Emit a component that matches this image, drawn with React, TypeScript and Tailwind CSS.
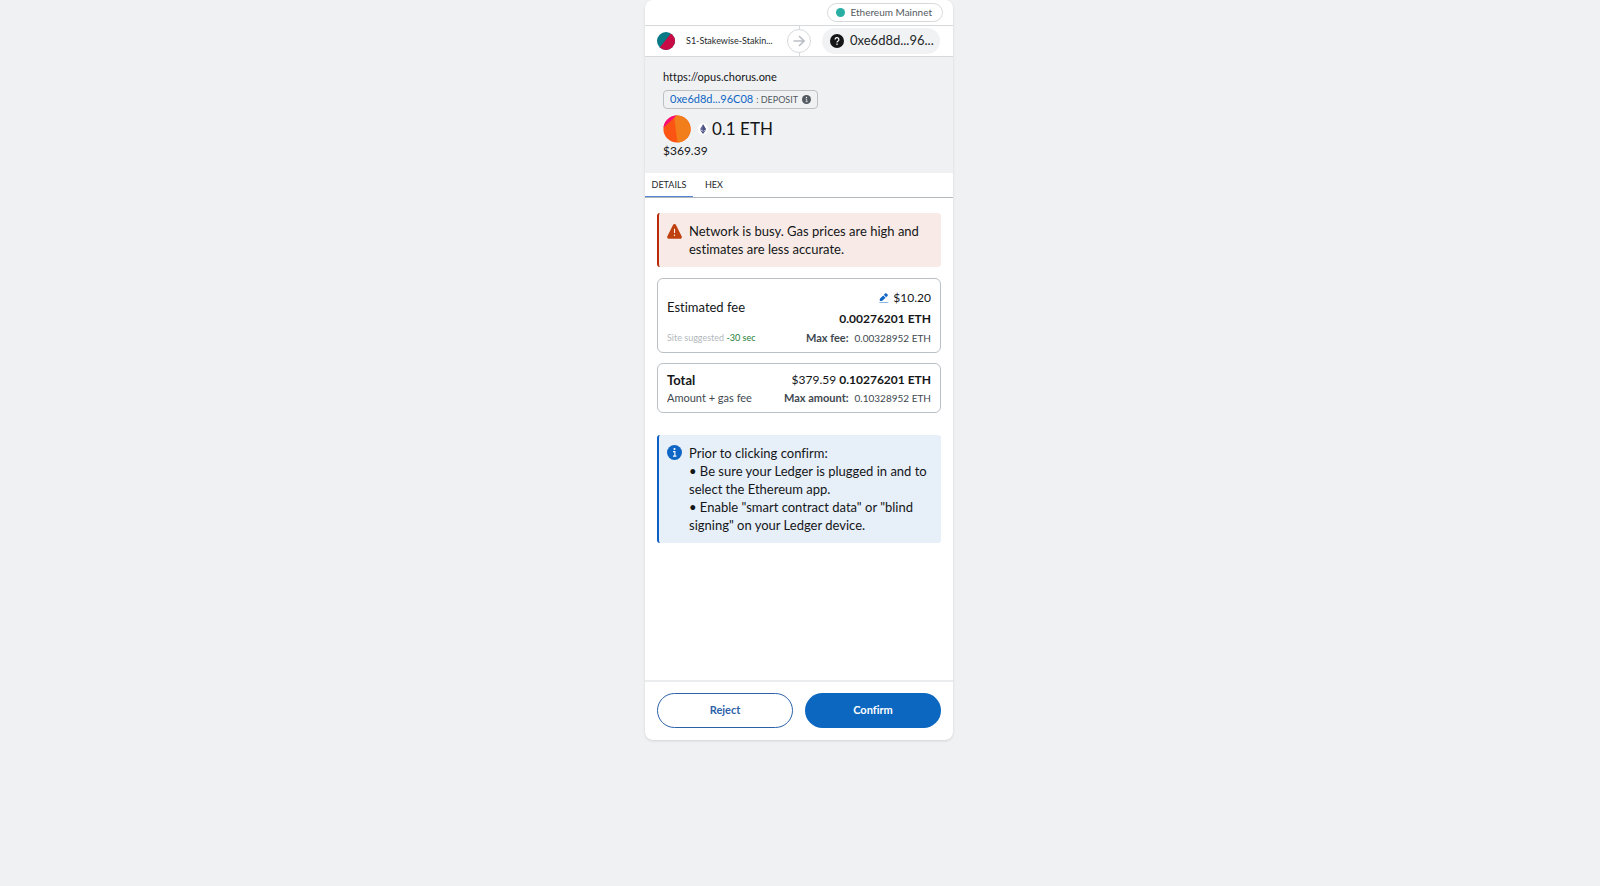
import type { ReactNode } from 'react'

function InfoIcon({ className }: { className: string }) {
  return (
    <svg viewBox="0 0 16 16" className={className} aria-hidden="true">
      <circle cx="8" cy="8" r="8" fill="currentColor" />
      <circle cx="8" cy="4.3" r="1.1" fill="#fff" />
      <path d="M6.4 7.1h2v4.6M6.4 11.8h3.6" stroke="#fff" strokeWidth="1.2" fill="none" />
    </svg>
  )
}

function WarningIcon() {
  return (
    <svg viewBox="0 0 16 16" className="mt-[2px] size-[15px] shrink-0 text-[#bf4110]" aria-hidden="true">
      <path
        d="M8 2 14 14H2Z"
        fill="currentColor"
        stroke="currentColor"
        strokeWidth="3.6"
        strokeLinejoin="round"
      />
      <path d="M8 5v4.6M8 11.2v1.7" stroke="#f8ebe7" strokeWidth="1.2" />
    </svg>
  )
}

function AccountAvatar() {
  return (
    <svg viewBox="0 0 18 18" className="size-[18px] shrink-0" aria-hidden="true">
      <clipPath id="account">
        <circle cx="9" cy="9" r="9" />
      </clipPath>
      <g clipPath="url(#account)">
        <rect width="18" height="18" fill="#077a85" />
        <path d="M15 0 2 16.5 4 18h14V0Z" fill="#c80a45" />
        <path d="M0 12.5 4.5 18H0Z" fill="#2a50d8" />
      </g>
    </svg>
  )
}

function SiteAvatar() {
  return (
    <svg viewBox="0 0 28 28" className="size-7" aria-hidden="true">
      <clipPath id="site">
        <circle cx="14" cy="14" r="13.6" />
      </clipPath>
      <g clipPath="url(#site)">
        <rect width="28" height="28" fill="#fc5412" />
        <path d="M11 0 14.5 28H28V0Z" fill="#f27e1b" />
        <path d="M0 0h14L0 13Z" fill="#fb0a7c" />
      </g>
    </svg>
  )
}

function EthIcon() {
  return (
    <svg viewBox="0 0 10 12" className="h-3 w-[10px]" aria-hidden="true">
      <ellipse cx="5" cy="6" rx="5" ry="6" fill="#fff" />
      <path d="M5 1.2 2 6.2 5 8l3-1.8Z" fill="#62689a" />
      <path d="M5 1.2V8l3-1.8ZM2 6.9l3 4.2 3-4.2-3 1.7Z" fill="#4a5080" />
    </svg>
  )
}

function Header() {
  return (
    <header>
      <div className="flex h-[26px] items-center justify-end border-b border-[#d6d9dc] pr-[10px]">
        <div className="flex h-[19px] items-center gap-[5px] rounded-full border border-[#d6d9dc] pr-[10px] pl-2 text-[10px] text-[#535a61]">
          <span className="size-[9px] rounded-full bg-[#29aea4]" />
          Ethereum Mainnet
        </div>
      </div>
      <div className="flex h-[31px] items-center border-b border-[#d6d9dc] pr-[13px] pl-3">
        <AccountAvatar />
        <span className="ml-[11px] flex-1 text-[9px] text-[#24272a]">S1-Stakewise-Stakin...</span>
        <div className="flex h-full flex-col items-center">
          <span className="w-px flex-1 bg-[#d6d9dc]" />
          <span className="flex size-6 items-center justify-center rounded-full border border-[#d6d9dc]">
            <svg viewBox="0 0 12 12" className="size-3" fill="none" stroke="#babfc5" strokeWidth="1.6" aria-hidden="true">
              <path d="M.5 6h10.5M6 1l5 5-5 5" />
            </svg>
          </span>
          <span className="w-px flex-1 bg-[#d6d9dc]" />
        </div>
        <div className="ml-[11px] flex h-[26px] w-[118px] items-center gap-[6px] rounded-full bg-[#f1f2f3] pl-2 text-[13px] text-[#24272a]">
          <svg viewBox="0 0 14 14" className="size-[14px] shrink-0" aria-hidden="true">
            <circle cx="7" cy="7" r="7" fill="#141618" />
            <path d="M5.1 5.6a1.9 1.9 0 1 1 2.7 1.7c-.6.3-.8.6-.8 1.2M7 9.6v1.3" fill="none" stroke="#fff" strokeWidth="1.2" />
          </svg>
          0xe6d8d...96...
        </div>
      </div>
    </header>
  )
}

function Summary() {
  return (
    <section className="bg-[#f0f1f3] px-[18px] pt-[11px] pb-[15px] text-[#141618]">
      <p className="text-[11px] leading-[18px]">https://opus.chorus.one</p>
      <div className="mt-1 flex h-[19px] w-fit items-center rounded-sm border border-[#bbc0c5] px-[6px] text-[11px]">
        <a href="#contract" className="text-[#0f66c5]">0xe6d8d...96C08</a>
        <span className="ml-[3px] text-[9px] text-[#535a61]">: DEPOSIT</span>
        <InfoIcon className="ml-1 size-[9px] text-[#535a61]" />
      </div>
      <div className="mt-[5px] flex h-[30px] items-center">
        <SiteAvatar />
        <span className="ml-[7px] flex items-center gap-1 text-[17px]">
          <EthIcon />
          0.1 ETH
        </span>
      </div>
      <p className="text-xs leading-[14px]">$369.39</p>
    </section>
  )
}

function Tabs() {
  return (
    <nav className="flex h-[25px] border-b border-[#b3b8bd] text-[9px] text-[#24272a]" role="tablist">
      <button type="button" role="tab" aria-selected="true" className="w-12 border-b border-[#5583d6]">
        DETAILS
      </button>
      <button type="button" role="tab" aria-selected="false" className="px-3">
        HEX
      </button>
    </nav>
  )
}

function Notice({ icon, className, children }: { icon: ReactNode; className: string; children: ReactNode }) {
  return (
    <div className={`flex gap-[7px] rounded-[3px] border-l-2 py-[9px] pr-2 pl-2 text-[13px] leading-[18px] text-[#141618] ${className}`}>
      {icon}
      <div>{children}</div>
    </div>
  )
}

export default function App() {
  return (
    <div className="min-h-screen bg-[#f0f1f3] pr-[2px] font-['Lato','Liberation_Sans',sans-serif] [font-variant-ligatures:none]">
      <main className="mx-auto flex min-h-[740px] max-w-[308px] flex-col overflow-hidden rounded-lg bg-white shadow-sm">
        <Header />
        <Summary />
        <Tabs />
        <div className="flex flex-1 flex-col px-3 pt-[15px] pb-6">
          <Notice className="border-[#b92a0a] bg-[#f8ebe7]" icon={<WarningIcon />}>
            Network is busy. Gas prices are high and estimates are less accurate.
          </Notice>

          <section className="mt-[11px] rounded-md border border-[#bbc0c5] px-[9px] pt-2 pb-[5px] text-xs text-[#141618]">
            <div className="flex items-center justify-between">
              <span className="text-[13px]">Estimated fee</span>
              <div className="text-right">
                <div className="flex h-[22px] items-center justify-end gap-1">
                  <button type="button" aria-label="Edit fee">
                    <svg viewBox="0 0 10 10" className="size-[10px]" fill="#0f66c5" aria-hidden="true">
                      <path d="M.8 8V5.8L4.2 2.4l2.4 2.4L3 8ZM4.8 1.8 6.2.4q.6-.6 1.2 0l1.2 1.2q.6.6 0 1.2L7.2 4.2Z" />
                      <path d="M.3 9h9v.8h-9Z" opacity=".6" />
                    </svg>
                  </button>
                  $10.20
                </div>
                <div className="leading-5 font-bold">0.00276201 ETH</div>
              </div>
            </div>
            <div className="flex justify-between leading-[18px]">
              <span className="text-[9px] text-[#b3b8bd]">
                Site suggested <span className="text-[#1c7e33]">-30 sec</span>
              </span>
              <span className="text-[10px] text-[#414850]">
                <b className="mr-[6px] text-[11px]">Max fee:</b>0.00328952 ETH
              </span>
            </div>
          </section>

          <section className="mt-[10px] rounded-md border border-[#bbc0c5] px-[9px] pt-[7px] pb-[5px] text-xs leading-[18px] text-[#141618]">
            <div className="flex justify-between">
              <b className="text-[13px]">Total</b>
              <span>
                $379.59 <b>0.10276201 ETH</b>
              </span>
            </div>
            <div className="flex justify-between text-[11px] leading-[18px] text-[#414850]">
              <span>Amount + gas fee</span>
              <span className="text-[10px]">
                <b className="mr-[6px] text-[11px]">Max amount:</b>0.10328952 ETH
              </span>
            </div>
          </section>

          <Notice
            className="mt-[22px] border-[#0c5fc4] bg-[#e7eff9]"
            icon={<InfoIcon className="mt-px size-[15px] shrink-0 text-[#0f66c5]" />}
          >
            <p>Prior to clicking confirm:</p>
            <p>• Be sure your Ledger is plugged in and to select the Ethereum app.</p>
            <p>• Enable "smart contract data" or "blind signing" on your Ledger device.</p>
          </Notice>
        </div>
        <footer className="grid grid-cols-2 gap-3 border-t-2 border-[#eaecee] px-3 pt-[11px] pb-3 text-[11px] font-bold">
          <button type="button" className="h-[35px] rounded-full border border-[#2c62a8] text-[#2c62a8]">
            Reject
          </button>
          <button type="button" className="h-[35px] rounded-full bg-[#0b67c0] text-white">
            Confirm
          </button>
        </footer>
      </main>
    </div>
  )
}
